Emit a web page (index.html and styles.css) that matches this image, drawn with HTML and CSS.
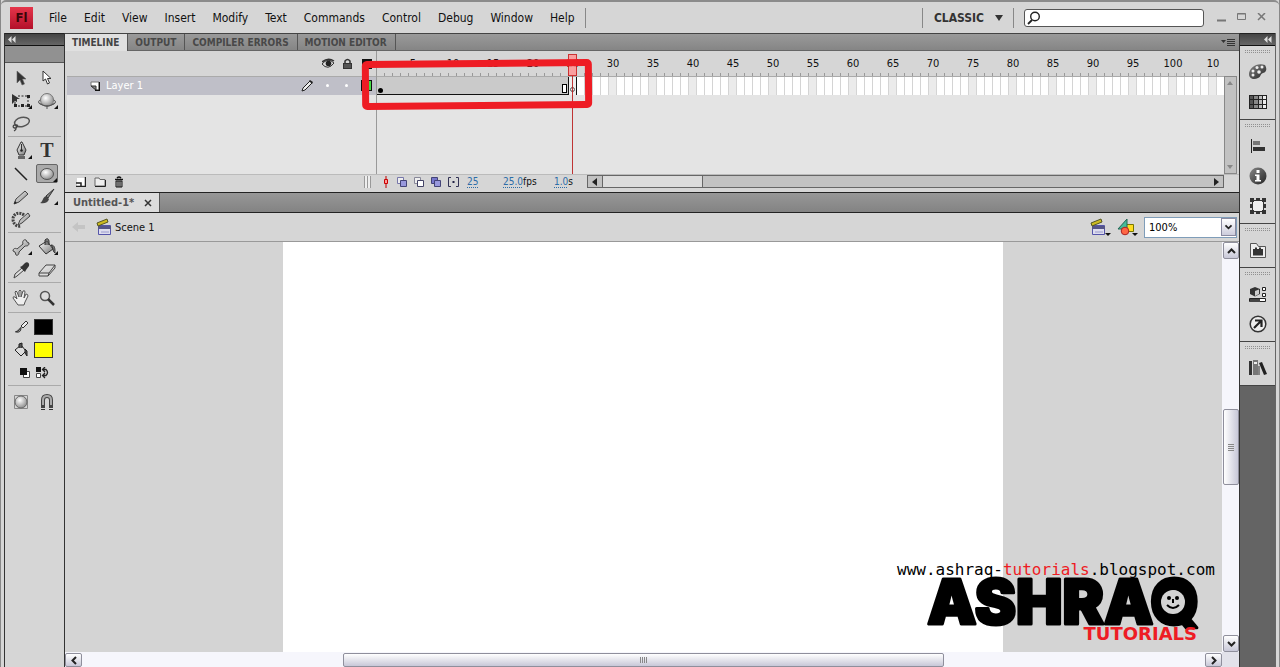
FILE: index.html
```html
<!DOCTYPE html>
<html lang="en">
<head>
    <meta charset="UTF-8">
    <meta name="viewport" content="width=device-width, initial-scale=1.0">
    <title>Untitled-1</title>
    <link rel="stylesheet" href="styles.css">
</head>
<body>
    <svg class="defs" width="0" height="0" aria-hidden="true">
        <defs>
            <linearGradient id="metal" x1="0" y1="0" x2="1" y2="1">
                <stop offset="0" stop-color="#fff"/>
                <stop offset="1" stop-color="#777"/>
            </linearGradient>
            <radialGradient id="ball" cx="0.4" cy="0.35" r="0.7">
                <stop offset="0" stop-color="#fff"/>
                <stop offset="1" stop-color="#888"/>
            </radialGradient>
            <linearGradient id="dark" x1="0" y1="0" x2="1" y2="1">
                <stop offset="0" stop-color="#888"/>
                <stop offset="1" stop-color="#222"/>
            </linearGradient>
        </defs>
    </svg>

    <div class="app">
        <header class="menubar">
            <span class="app-logo">Fl</span>
            <nav class="menu">
                <button>File</button>
                <button>Edit</button>
                <button>View</button>
                <button>Insert</button>
                <button>Modify</button>
                <button>Text</button>
                <button>Commands</button>
                <button>Control</button>
                <button>Debug</button>
                <button>Window</button>
                <button>Help</button>
            </nav>
            <button class="workspace">CLASSIC <svg width="8" height="6"><path d="M0 0h8L4 6z" fill="#333"/></svg></button>
            <label class="search">
                <svg width="14" height="14" viewBox="0 0 14 14"><circle cx="8" cy="5.500" r="4.300" fill="none" stroke="#222" stroke-width="1.400"/><path d="M5 9L1 13" stroke="#222" stroke-width="1.800"/></svg>
                <input type="text" aria-label="Search">
            </label>
            <div class="window-buttons">
                <button aria-label="Minimize"><svg width="10" height="10"><path d="M0 7.500h9" stroke="#777" stroke-width="2"/></svg></button>
                <button aria-label="Maximize"><svg width="10" height="10"><path d="M.5 .5h8v6h-8zM.5 1h8" fill="none" stroke="#777"/></svg></button>
                <button aria-label="Close"><svg width="10" height="10"><path d="M1 0l7 7M8 0l-7 7" stroke="#777" stroke-width="1.500"/></svg></button>
            </div>
        </header>

        <main class="workarea">
            <aside class="tools">
                <div class="panel-top"><svg width="8" height="7"><path d="M3.500 0v7L0 3.500zM7.500 0v7L4 3.500z" fill="#ddd"/></svg></div>
                <div class="tools-title"></div>
                <div class="tool-group first">
                    <button aria-label="Selection"><svg width="20" height="20" viewBox="0 0 20 20"><path d="M6 3v12l3-3 2 5 2.500-1-2-5H15z" fill="#333" stroke="#666" stroke-width=".6"/></svg></button>
                    <button aria-label="Subselection"><svg width="20" height="20" viewBox="0 0 20 20"><path d="M6 3v10l2.500-2 2 5 2-1-2-4.500H14z" fill="#fff" stroke="#333"/></svg></button>
                    <button class="has-more" aria-label="Free Transform"><svg width="20" height="20" viewBox="0 0 20 20"><path d="M7 5h10v10H4V10" fill="none" stroke="#222" stroke-dasharray="2 1.500"/><path d="M1 3v10l3-3 2 1V8h3z" fill="#333"/><path d="M16 4h3v3h-3zM16 13h3v3h-3zM3 13h3v3H3zM10 13h3v3h-3z" fill="#222"/></svg></button>
                    <button class="has-more" aria-label="3D Rotation"><svg width="20" height="20" viewBox="0 0 20 20"><ellipse cx="10" cy="11" rx="8.500" ry="3.500" fill="none" stroke="#555"/><circle cx="10" cy="9" r="6.500" fill="url(#ball)" stroke="#777"/><path d="M2 12q8 6 16 0M10 14v4" fill="none" stroke="#555"/></svg></button>
                    <button aria-label="Lasso"><svg width="20" height="20" viewBox="0 0 20 20"><ellipse cx="11" cy="8" rx="7.500" ry="4.500" fill="none" stroke="#555" stroke-width="1.500" transform="rotate(-12 11 8)"/><path d="M5 11c-3-1-4 3-1 3s3-4 1-3c1 3 0 5-2 6" fill="none" stroke="#444" stroke-width="1.300"/></svg></button>
                </div>
                <div class="tool-group">
                    <button class="has-more" aria-label="Pen"><svg width="20" height="20" viewBox="0 0 20 20"><path d="M10 1L6 9l2 5h5l2-5-4-8z" fill="url(#metal)" stroke="#333"/><path d="M10.500 3v6" stroke="#333"/><circle cx="10.500" cy="9.500" r="1.300" fill="#222"/><path d="M7 15h7v3H7z" fill="#666"/></svg></button>
                    <button class="text-tool" aria-label="Text tool">T</button>
                    <button aria-label="Line"><svg width="20" height="20" viewBox="0 0 20 20"><path d="M4 4l12 12" stroke="#222" stroke-width="1.500"/></svg></button>
                    <button class="has-more active" aria-label="Oval"><svg width="20" height="20" viewBox="0 0 20 20"><ellipse cx="10" cy="10" rx="6.500" ry="5.500" fill="url(#ball)" stroke="#555"/></svg></button>
                    <button aria-label="Pencil"><svg width="20" height="20" viewBox="0 0 20 20"><path d="M3 17l2-5 9-8 3 3-9 8z" fill="url(#metal)" stroke="#444"/><path d="M3 17l1-3 2 2z" fill="#222"/></svg></button>
                    <button class="has-more" aria-label="Brush"><svg width="20" height="20" viewBox="0 0 20 20"><path d="M17 2l-8 7 2 2z" fill="#888" stroke="#333"/><path d="M9 9l3 3c-1 4-5 5-9 4 3-1 2-5 6-7z" fill="#444"/></svg></button>
                    <button aria-label="Deco"><svg width="20" height="20" viewBox="0 0 20 20"><path d="M13 5C8 1 2 4 2 9s4 8 8 7" fill="none" stroke="#444" stroke-width="3" stroke-dasharray="2 1"/><path d="M7 15l2-5 8-7 2 3-8 7z" fill="url(#metal)" stroke="#444"/></svg></button>
                </div>
                <div class="tool-group">
                    <button class="has-more" aria-label="Bone"><svg width="20" height="20" viewBox="0 0 20 20"><path d="M12 7c-1-3 1-5 3-4l1 2 2 1c0 3-2 3-4 3l-6 6c0 3-2 4-3 3l-1-3-2-1c0-3 3-3 4-2z" fill="url(#metal)" stroke="#444"/></svg></button>
                    <button class="has-more" aria-label="Paint Bucket"><svg width="20" height="20" viewBox="0 0 20 20"><path d="M2 9l8-5 6 8-7 5z" fill="url(#metal)" stroke="#333"/><path d="M8 8V3q3-3 4 1v4M14 8c4 0 4 4 4 8-3-1-1-6-4-8z" fill="#555" fill-opacity=".7" stroke="#333"/></svg></button>
                    <button aria-label="Eyedropper"><svg width="20" height="20" viewBox="0 0 20 20"><path d="M3 18l1-4 7-6 2 2-7 6z" fill="#ddd" stroke="#444"/><path d="M9 7l5 5 1-2 3-4c1-3-2-5-4-3l-3 3z" fill="#333"/></svg></button>
                    <button aria-label="Eraser"><svg width="20" height="20" viewBox="0 0 20 20"><path d="M2 13l7-8h9l-6 8zM2 13v3h9l7-8V5M12 13l-1 3" fill="#ddd" stroke="#444"/></svg></button>
                </div>
                <div class="tool-group tall">
                    <button aria-label="Hand"><svg width="20" height="20" viewBox="0 0 20 20"><path d="M7 17L2 10q0-2 2-1l2 2-2-7q1-2 2 0l2 5V3q1-2 2 0v6l2-6q2-1 2 1l-1 6 2-4q2 0 2 2l-3 6-1 3z" fill="#eee" stroke="#555"/></svg></button>
                    <button aria-label="Zoom"><svg width="20" height="20" viewBox="0 0 20 20"><circle cx="8" cy="8" r="4.500" fill="#ddd" stroke="#555" stroke-width="1.500"/><path d="M11 11l6 6" stroke="#333" stroke-width="2.500"/></svg></button>
                </div>
                <div class="tool-group">
                    <button aria-label="Stroke color"><svg width="16" height="16" viewBox="0 0 16 16"><path d="M2 13l3-1 5-6M3 13q5 1 5-4" fill="#999" stroke="#333"/><path d="M8 7l5-5 2 2-5 5z" fill="#eee" stroke="#333"/></svg></button>
                    <button class="swatch black" aria-label="Black"></button>
                    <button aria-label="Fill color"><svg width="16" height="16" viewBox="0 0 16 16"><path d="M2 8l6-5 5 6-5 5z" fill="#ddd" stroke="#222"/><path d="M6 6V2l3-1v5M12 7l2 2v5l-2-3z" fill="#555" stroke="#222"/></svg></button>
                    <button class="swatch yellow" aria-label="Yellow"></button>
                    <button class="push-right" aria-label="Black and white"><svg width="10" height="10"><path d="M3.500 3.500h6v6h-6z" fill="#fff" stroke="#444"/><path d="M0 0h7v7H0z" fill="#111"/></svg></button>
                    <button class="push-left" aria-label="Swap colors"><svg width="14" height="12"><path d="M0 0h5v5H0z" fill="#111"/><path d="M.5 6.500h4v4h-4z" fill="#fff" stroke="#444"/><path d="M7 2.500h3q3 3 0 6H7M9 0L6.500 2.500 9 5M9 6L6.500 8.500 9 11" fill="none" stroke="#222" stroke-width="1.300"/></svg></button>
                </div>
                <div class="tool-group last">
                    <button aria-label="Object drawing"><svg width="16" height="16"><path d="M1.500 1.500h13v13h-13z" fill="none" stroke="#888"/><circle cx="8" cy="8" r="6" fill="url(#ball)" stroke="#666"/></svg></button>
                    <button aria-label="Snap to objects"><svg width="16" height="18" viewBox="0 0 16 18"><path d="M4 15V7q0-4 4-4t4 4v8" fill="none" stroke="#444" stroke-width="4"/><path d="M4 12V7q0-4 4-4t4 4v5" fill="none" stroke="#aaa" stroke-width="2"/><path d="M2 16.500h4M10 16.500h4" stroke="#333"/></svg></button>
                </div>
            </aside>

            <section class="center">
                <div class="tabs">
                    <button class="tab active">TIMELINE</button>
                    <button class="tab">OUTPUT</button>
                    <button class="tab">COMPILER ERRORS</button>
                    <button class="tab">MOTION EDITOR</button>
                    <button class="panel-menu" aria-label="Panel menu"><svg width="14" height="9"><path d="M0 2h5L2.500 5zM6 1h8v1H6zM6 3h8v1H6zM6 5h8v1H6zM6 7h8v1H6z" fill="#333"/></svg></button>
                </div>

                <div class="timeline">
                    <div class="layers">
                        <div class="layer-head">
                            <svg width="13" height="12" viewBox="0 0 13 12"><path d="M0 6q6-7 12-1-6 8-12 1z" fill="#ddd" stroke="#333"/><circle cx="6.500" cy="5.500" r="2.800" fill="#222"/><path d="M0 4q6-5 12-1" fill="none" stroke="#333" stroke-width="1.500"/></svg>
                            <svg width="13" height="12" viewBox="0 0 13 12"><path d="M4 6V3q2.500-3 5 0v3" fill="none" stroke="#333" stroke-width="1.500"/><path d="M2 5h9v6H2z" fill="#333"/><path d="M3 7h7M3 9h7" stroke="#777"/></svg>
                            <svg width="13" height="12" viewBox="0 0 13 12"><path d="M2 1h10v10H2z" fill="#111"/></svg>
                        </div>
                        <div class="layer-row">
                            <svg width="10" height="10" viewBox="0 0 10 10"><path d="M1 1h8v8H6L1 5z" fill="#fff" stroke="#777"/><path d="M1 5h5v4z" fill="#888" stroke="#333"/><path d="M9.500 1v8.500H5" fill="none" stroke="#111" stroke-width="1.500"/></svg>
                            <span class="layer-name">Layer 1</span>
                            <svg width="13" height="13" viewBox="0 0 13 13"><path d="M1 12l1-3 7-7 2 2-7 7z" fill="#eee" stroke="#222"/><path d="M9 1l3 2-1 2-3-3z" fill="#222"/></svg>
                            <i class="dot"></i>
                            <i class="dot"></i>
                            <i class="outline-box"></i>
                        </div>
                        <div class="layer-empty"></div>
                    </div>

                    <div class="frames">
                        <ol class="ruler">
                            <li>5</li><li>10</li><li>15</li><li>20</li><li>25</li><li>30</li><li>35</li>
                            <li>40</li><li>45</li><li>50</li><li>55</li><li>60</li><li>65</li><li>70</li>
                            <li>75</li><li>80</li><li>85</li><li>90</li><li>95</li><li>100</li><li>10</li>
                        </ol>
                        <div class="frame-row">
                            <div class="span-frames"><i class="key"></i><i class="span-end"></i></div>
                            <div class="blank-key"><i></i></div>
                        </div>
                        <div class="playhead"></div>
                        <div class="highlight-box"></div>
                    </div>

                    <div class="frames-scroll">
                        <svg width="11" height="12"><path d="M2 8h6L5 4z" fill="#888"/></svg>
                        <svg width="11" height="12"><path d="M2 4h6L5 8z" fill="#888"/></svg>
                    </div>
                </div>

                <div class="timeline-foot">
                    <div class="layer-actions">
                        <button aria-label="New layer"><svg width="10" height="10"><path d="M1 1h8v8H1z" fill="#fff"/><path d="M9.500 0v9.500H0M0 6h5v3" fill="none" stroke="#222" stroke-width="1.500"/></svg></button>
                        <button aria-label="New folder"><svg width="12" height="10"><path d="M1 2.500V1h4l1 1.500h5V9H1z" fill="#eee" stroke="#666"/><path d="M1 9.500h10.500V3" fill="none" stroke="#222"/></svg></button>
                        <button aria-label="Delete"><svg width="10" height="12"><path d="M1 3.500h8M3 2q2-2 4 0" fill="none" stroke="#111" stroke-width="1.500"/><path d="M2 5h6v6H2z" fill="#bbb" stroke="#111"/><path d="M4 5v6M6 5v6" stroke="#222"/></svg></button>
                    </div>
                    <div class="frame-actions">
                        <i class="splitter"></i>
                        <button aria-label="Center frame"><svg width="8" height="14"><path d="M4 1v12" stroke="#b00"/><path d="M2.500 4.500h3v4h-3z" fill="#f99" stroke="#c00"/></svg></button>
                        <button aria-label="Onion skin"><svg width="10" height="10"><path d="M.5.500h6v6h-6z" fill="#eee" stroke="#77a"/><path d="M3.500 3.500h6v6h-6z" fill="#99d" stroke="#447"/></svg></button>
                        <button aria-label="Onion skin outlines"><svg width="10" height="10"><path d="M.5.500h6v6h-6z" fill="#eee" stroke="#889"/><path d="M3.500 3.500h6v6h-6z" fill="#fff" stroke="#446"/></svg></button>
                        <button aria-label="Edit multiple frames"><svg width="10" height="10"><path d="M.5.500h6v6h-6z" fill="#77c" stroke="#447"/><path d="M3.500 3.500h6v6h-6z" fill="#99d" stroke="#447"/></svg></button>
                        <button aria-label="Modify markers"><svg width="11" height="10"><path d="M3 .5H.5v9H3M8 .5h2.500v9H8" fill="none" stroke="#335"/><path d="M4.500 4h2v2h-2z" fill="#224"/></svg></button>
                    </div>
                    <div class="readouts">
                        <span><a href="#">25</a></span>
                        <span><a href="#">25.0</a>fps</span>
                        <span><a href="#">1.0</a>s</span>
                    </div>
                    <div class="foot-scroll">
                        <button aria-label="Scroll left"><svg width="6" height="8"><path d="M5 0v8L0 4z" fill="#222"/></svg></button>
                        <i class="thumb"></i>
                        <button class="end" aria-label="Scroll right"><svg width="6" height="8"><path d="M1 0v8l5-4z" fill="#222"/></svg></button>
                    </div>
                </div>

                <div class="doc-tabs">
                    <button class="doc-tab">Untitled-1* <svg width="8" height="8"><path d="M1 1l6 6M7 1L1 7" stroke="#333" stroke-width="1.500"/></svg></button>
                </div>

                <div class="scene-bar">
                    <svg width="14" height="12"><path d="M0 6l6-5v3h7v4H6v3z" fill="#c4c4c4"/></svg>
                    <svg class="clap" width="16" height="18" viewBox="0 0 16 18"><path d="M2.500 7.500h12v9h-12z" fill="#dde" stroke="#55a"/><path d="M2 8h13v3H2z" fill="#558"/><path d="M5 14h8" stroke="#99c"/><path d="M1 5l10-4 1 3-10 4z" fill="#cb2" stroke="#552"/></svg>
                    <span class="scene-name">Scene 1</span>
                    <button class="has-more" aria-label="Edit scene"><svg width="18" height="18" viewBox="0 0 18 18"><path d="M2.500 7.500h12v9h-12z" fill="#dde" stroke="#55a"/><path d="M2 8h13v3H2z" fill="#558"/><path d="M5 14h8" stroke="#99c"/><path d="M1 5l10-4 1 3-10 4z" fill="#cb2" stroke="#552"/></svg></button>
                    <button class="has-more" aria-label="Edit symbols"><svg width="18" height="18" viewBox="0 0 18 18"><path d="M9.500 6.500h7v7h-7z" fill="#fd2" stroke="#770"/><path d="M1 11L10 1v10z" fill="#4b9" stroke="#265"/><circle cx="8" cy="13" r="3.800" fill="#f64" stroke="#a22"/></svg></button>
                    <div class="zoom">
                        <select aria-label="Zoom level"><option>100%</option></select>
                        <svg width="15" height="18" viewBox="0 0 15 18"><path d="M4 7l3.500 3.500L11 7" fill="none" stroke="#222" stroke-width="2"/></svg>
                    </div>
                </div>

                <div class="stage-area">
                    <div class="pasteboard">
                        <div class="stage"></div>
                        <div class="watermark">
                            <p class="site">www.ashraq-<span>tutorials</span>.blogspot.com</p>
                            <svg class="wordmark" width="310" height="48" viewBox="0 0 310 48">
                                <text x="302" y="46" text-anchor="end">ASHRAQ</text>
                                <circle cx="276" cy="24" r="12" fill="#d4d4d4"/>
                                <circle cx="272" cy="20" r="2"/>
                                <circle cx="280" cy="20" r="2"/>
                                <path d="M276 21v4M270 27q6 6 12 0" fill="none" stroke="#000" stroke-width="2"/>
                            </svg>
                            <p class="sub">TUTORIALS</p>
                        </div>
                    </div>
                    <div class="vscroll">
                        <button aria-label="Up"><svg width="9" height="6"><path d="M1 5l3.500-3.500L8 5" fill="none" stroke="#222" stroke-width="2"/></svg></button>
                        <i class="thumb"></i>
                        <button aria-label="Down"><svg width="9" height="6"><path d="M1 1l3.500 3.500L8 1" fill="none" stroke="#222" stroke-width="2"/></svg></button>
                    </div>
                    <div class="hscroll">
                        <button aria-label="Left"><svg width="6" height="9"><path d="M5 1L1.500 4.500 5 8" fill="none" stroke="#222" stroke-width="2"/></svg></button>
                        <i class="thumb"></i>
                        <button aria-label="Right"><svg width="6" height="9"><path d="M1 1l3.500 3.500L1 8" fill="none" stroke="#222" stroke-width="2"/></svg></button>
                    </div>
                </div>
            </section>

            <aside class="dock">
                <div class="panel-top right"><svg width="8" height="7"><path d="M3.500 0v7L0 3.500zM7.500 0v7L4 3.500z" fill="#ddd"/></svg></div>
                <div class="dock-group">
                    <button aria-label="Color"><svg width="20" height="18" viewBox="0 0 20 18"><path d="M17 2c-8-3-16 3-16 9 0 5 5 6 9 4 3-1 2-4 5-5 4-1 4-5 2-8z" fill="url(#dark)"/><g fill="#eee"><circle cx="5" cy="8" r="1.500"/><circle cx="9" cy="4.500" r="1.500"/><circle cx="14" cy="4" r="1.500"/><circle cx="5" cy="12" r="1.500"/><circle cx="11" cy="9" r="1.800"/></g></svg></button>
                    <button aria-label="Swatches"><svg width="18" height="14"><path d="M0 0h18v14H0z" fill="#222"/><path d="M1 1h3v3H1zM1 5h3v4H1zM1 10h3v3H1z" fill="#555"/><path d="M5 1h4v3H5zM5 5h4v4H5zM5 10h4v3H5z" fill="#888"/><path d="M10 1h3v3h-3zM10 5h3v4h-3zM10 10h3v3h-3z" fill="#bbb"/><path d="M14 1h3v3h-3zM14 5h3v4h-3zM14 10h3v3h-3z" fill="#eee"/></svg></button>
                </div>
                <div class="dock-group">
                    <button aria-label="Align"><svg width="16" height="16"><path d="M1.500 1v14" stroke="#222"/><path d="M3 3h7v4H3z" fill="#777"/><path d="M3 9h12v4H3z" fill="#333"/></svg></button>
                    <button aria-label="Info"><svg width="18" height="18"><circle cx="9" cy="9" r="8.500" fill="url(#dark)"/><path d="M7.500 3h3v3h-3zM6 7.500h4.500V13H12v1.500H6V13h1.500V9H6z" fill="#fff"/></svg></button>
                    <button aria-label="Transform"><svg width="16" height="16"><path d="M2.500 2.500h11v11h-11z" fill="#eee" stroke="#333"/><path d="M0 0h4v4H0zM6 0h4v3H6zM12 0h4v4h-4zM0 6h3v4H0zM13 6h3v4h-3zM0 12h4v4H0zM6 13h4v3H6zM12 12h4v4h-4z" fill="#333"/></svg></button>
                </div>
                <div class="dock-group">
                    <button aria-label="Library"><svg width="18" height="17"><path d="M1.500 15.500v-14h6l2 3h7v11z" fill="#eee" stroke="#555"/><path d="M4 7h2V5.500h2V7h2V5.500h2V7h2v6.500H4z" fill="#333"/></svg></button>
                </div>
                <div class="dock-group">
                    <button aria-label="Components"><svg width="18" height="17"><path d="M1 3l5-2 5 2v5l-5 2.500L1 8z" fill="#333"/><path d="M6 5l4-1.500V8L6 10z" fill="#ccc"/><path d="M13.500 1.500h3v3h-3zM13.500 7.500h3v3h-3zM.5 12.500h16v3H.5z" fill="#fff" stroke="#222"/><path d="M1 13h10v3H1z" fill="#444"/></svg></button>
                    <button aria-label="Behaviors"><svg width="18" height="18"><circle cx="9" cy="9" r="7.800" fill="#eee" stroke="#333" stroke-width="1.500"/><path d="M5 13l7-7M6 5.500h6.500V12" fill="none" stroke="#222" stroke-width="2.200"/></svg></button>
                </div>
                <div class="dock-group">
                    <button aria-label="Common libraries"><svg width="20" height="18"><path d="M1 2h3v14H1z" fill="#333"/><path d="M5 1h5v15H5z" fill="#777"/><path d="M6 3h3v2H6z" fill="#eee"/><path d="M11 4l3-1 5 12-3 1z" fill="#222"/><path d="M11 7v9" stroke="#333"/></svg></button>
                </div>
            </aside>
        </main>
    </div>
</body>
</html>
```

FILE: styles.css
```css
* {
    box-sizing: border-box;
}

body {
    margin: 0;
    background: #d6d6d6;
    font-family: "DejaVu Sans Condensed", "DejaVu Sans", sans-serif;
    font-size: 12px;
    color: #111;
}

button {
    display: flex;
    align-items: center;
    justify-content: center;
    padding: 0;
    border: none;
    background: none;
    font: inherit;
    color: inherit;
}

svg,
i {
    display: block;
    flex-shrink: 0;
}

p,
ol {
    margin: 0;
    padding: 0;
    list-style: none;
}

.defs {
    position: absolute;
}

.app {
    display: flex;
    flex-direction: column;
    height: 100vh;
    border-left: 1px solid #888;
    border-right: 1px solid #888;
    overflow: hidden;
}

/* Menu bar */
.menubar {
    display: flex;
    align-items: center;
    height: 33px;
    flex-shrink: 0;
    padding: 0 12px 0 9px;
    border-top: 2px solid #8b8b8b;
    border-radius: 5px 5px 0 0;
}

.app-logo {
    display: flex;
    align-items: center;
    justify-content: center;
    width: 23px;
    height: 22px;
    background: linear-gradient(#e5354a, #b3102a);
    font-size: 13px;
    font-weight: bold;
    color: #3a0508;
}

.menu {
    display: flex;
    gap: 17px;
    height: 20px;
    margin-left: 16px;
    padding-right: 10px;
    border-right: 1px solid #888;
}

.workspace {
    gap: 11px;
    height: 20px;
    margin-left: auto;
    padding: 0 10px 0 11px;
    border-left: 1px solid #888;
    border-right: 1px solid #888;
    font-weight: bold;
    color: #333;
}

.search {
    display: flex;
    align-items: center;
    width: 180px;
    height: 18px;
    margin: 1px 13px 0 10px;
    padding: 0 2px;
    border: 1px solid #555;
    border-radius: 3px;
    background: #fff;
}

.search input {
    width: 100%;
    min-width: 0;
    height: 14px;
    padding: 0 4px;
    border: none;
    outline: none;
    background: none;
    font: inherit;
}

.window-buttons {
    display: flex;
    gap: 10px;
}

/* Main row */
.workarea {
    display: flex;
    flex: 1;
    min-height: 0;
    padding: 0 3px;
}

.panel-top {
    display: flex;
    align-items: center;
    height: 13px;
    padding: 0 3px;
    border-top: 1px solid #222;
    border-bottom: 1px solid #111;
    background: linear-gradient(#444, #666);
}

.panel-top.right {
    justify-content: flex-end;
}

.tools {
    width: 61px;
    flex-shrink: 0;
    border-left: 1px solid #333;
    border-right: 1px solid #333;
}

.tools-title {
    height: 17px;
    border-bottom: 1px solid #555;
    background: #919191;
}

.tool-group {
    display: grid;
    grid-template-columns: 26px 26px;
    grid-auto-rows: 23px;
    margin: 0 3px;
    padding: 2px 0 1px;
    border-bottom: 1px solid #aaa;
}

.tool-group.first {
    padding-top: 3px;
}

.tool-group button,
.scene-bar button {
    position: relative;
}

.tool-group.tall {
    grid-auto-rows: 26px;
}

.tool-group.last {
    grid-auto-rows: 28px;
    border: none;
}

.has-more::after {
    content: "";
    position: absolute;
    right: 2px;
    bottom: 3px;
    border-left: 4px solid transparent;
    border-bottom: 4px solid #111;
}

.scene-bar .has-more::after {
    right: 0;
    bottom: 0;
    border-right: 3px solid transparent;
    border-left: 3px solid transparent;
    border-top: 3px solid #111;
    border-bottom: none;
}

.text-tool {
    font-family: "Liberation Serif", serif;
    font-size: 20px;
    font-weight: bold;
    color: #333;
}

.tool-group .active {
    margin: 2px;
    border: 1px solid #666;
    border-radius: 2px;
    background: #aaa;
}

.tool-group .active::after {
    right: 0;
    bottom: 0;
}

.swatch {
    width: 19px;
    height: 16px;
    margin-top: 4px;
    border: 1px solid #333;
}

.swatch.black {
    background: #000;
}

.swatch.yellow {
    background: #ff0;
}

.push-right {
    padding-left: 8px;
}

.push-left {
    padding-right: 8px;
}

/* Center column */
.center {
    display: flex;
    flex-direction: column;
    flex: 1;
    min-width: 0;
}

.tabs {
    display: flex;
    height: 18px;
    flex-shrink: 0;
    border-top: 1px solid #444;
    border-bottom: 1px solid #666;
    background: linear-gradient(#9a9a9a, #858585);
}

.tab {
    padding: 0 8px 0 7px;
    border-right: 1px solid #555;
    font-size: 10px;
    font-weight: bold;
    color: #484848;
}

.tab.active {
    height: 17px;
    background: #e0e0e0;
    color: #444;
}

.panel-menu {
    margin-left: auto;
    padding-right: 4px;
}

.timeline {
    display: flex;
    height: 123px;
    flex-shrink: 0;
    padding: 0 2px;
}

.layers {
    display: flex;
    flex-direction: column;
    width: 309px;
    flex-shrink: 0;
}

.layer-head {
    display: flex;
    align-items: center;
    justify-content: flex-end;
    gap: 6px;
    height: 26px;
    padding-right: 3px;
    border-bottom: 1px solid #aaa;
}

.layer-row {
    display: flex;
    align-items: center;
    height: 18px;
    padding: 0 4px 1px 23px;
    background: #bfbfc8;
    font-size: 11px;
    color: #fff;
}

.layer-name {
    flex: 1;
    margin-left: 6px;
}

.dot {
    width: 3px;
    height: 3px;
    margin-left: 12px;
    border-radius: 2px;
    background: #fff;
}

.dot + .dot {
    margin-left: 16px;
}

.outline-box {
    width: 11px;
    height: 11px;
    margin-left: 13px;
    border: 1px solid #111;
    background: #4d4;
}

.layer-empty {
    flex: 1;
    background: #e4e4e4;
}

.frames {
    position: relative;
    flex: 1;
    min-width: 0;
    background: #e4e4e4;
    border-left: 1px solid #999;
}

.ruler {
    display: flex;
    height: 26px;
    padding-left: 16px;
    overflow: hidden;
    border-bottom: 1px solid #aaa;
    background: repeating-linear-gradient(90deg, transparent 0 7px, #999 7px 8px) 0 22px / 100% 3px no-repeat #d6d6d6;
    font-size: 11px;
    line-height: 25px;
}

.ruler li {
    width: 40px;
    flex-shrink: 0;
    text-align: center;
}

.frame-row {
    display: flex;
    height: 18px;
    background:
        repeating-linear-gradient(90deg, transparent 0 7px, #d4d4d4 7px 8px),
        repeating-linear-gradient(90deg, #fff 0 32px, #ebebeb 32px 40px);
}

.span-frames {
    display: flex;
    align-items: flex-end;
    justify-content: space-between;
    width: 192px;
    padding: 0 1px 1px;
    border-right: 1px solid #111;
    border-bottom: 1px solid #111;
    background: #cacaca;
}

.key {
    width: 5px;
    height: 5px;
    border-radius: 3px;
    background: #000;
}

.span-end {
    width: 5px;
    height: 9px;
    border: 1px solid #000;
    background: #fff;
}

.blank-key {
    display: flex;
    align-items: flex-end;
    justify-content: center;
    width: 8px;
    padding-bottom: 3px;
    border-right: 1px solid #111;
    background: #eee;
}

.blank-key i {
    width: 5px;
    height: 5px;
    border: 1px solid #555;
    border-radius: 3px;
}

.playhead {
    position: absolute;
    top: 3px;
    bottom: 0;
    left: 191px;
    width: 9px;
    background:
        linear-gradient(#f99, #f99) 1px 1px / 7px 20px no-repeat,
        linear-gradient(#c22, #c22) 0 0 / 9px 22px no-repeat,
        linear-gradient(#b22, #b22) 4px 0 / 1px 100% no-repeat;
    opacity: 0.9;
}

.highlight-box {
    position: absolute;
    top: 9px;
    left: -15px;
    width: 230px;
    height: 49px;
    border: 7px solid #ee1c24;
    border-radius: 5px;
    transform: rotate(-0.5deg);
}

.frames-scroll {
    display: flex;
    flex-direction: column;
    justify-content: space-between;
    width: 13px;
    margin-top: 25px;
    border: 1px solid #888;
    background: #c2c2c2;
}

.timeline-foot {
    display: flex;
    align-items: center;
    height: 18px;
    flex-shrink: 0;
    padding: 0 15px 4px 11px;
    border-top: 1px solid #bbb;
}

.layer-actions,
.frame-actions {
    display: flex;
    align-items: center;
    gap: 8px;
}

.layer-actions {
    width: 288px;
}

.frame-actions {
    gap: 7px;
}

.splitter {
    width: 7px;
    height: 12px;
    margin-right: 4px;
    background: repeating-linear-gradient(90deg, #999 0 1px, #eee 1px 3px);
}

.readouts {
    display: grid;
    grid-template-columns: 36px 51px 33px;
    margin-left: 8px;
    font-size: 10px;
}

.readouts a {
    color: #2d6da8;
    text-decoration: underline dotted;
    text-underline-offset: 2px;
}

.foot-scroll {
    display: flex;
    flex: 1;
    height: 13px;
    border: 1px solid #666;
    background: #c2c2c2;
}

.foot-scroll button {
    width: 14px;
}

.foot-scroll .thumb {
    width: 101px;
    border: 1px solid #666;
    border-width: 0 1px;
    background: #dcdcdc;
}

.foot-scroll .end {
    margin-left: auto;
}

.doc-tabs {
    display: flex;
    height: 21px;
    flex-shrink: 0;
    border-top: 1px solid #222;
    border-bottom: 1px solid #222;
    background: linear-gradient(#979797, #838383);
}

.doc-tab {
    gap: 10px;
    padding: 0 7px 0 8px;
    border-right: 1px solid #555;
    background: #dcdcdc;
    font-size: 11px;
    font-weight: bold;
    color: #555;
}

.scene-bar {
    display: flex;
    align-items: center;
    height: 29px;
    flex-shrink: 0;
    padding: 0 2px 0 7px;
    border-bottom: 1px solid #999;
    font-size: 11px;
}

.clap {
    margin-left: 10px;
}

.scene-name {
    flex: 1;
    margin-left: 3px;
}

.scene-bar button {
    width: 21px;
    margin-right: 6px;
    justify-content: flex-start;
}

.zoom {
    display: flex;
    align-items: center;
    width: 93px;
    height: 21px;
    border: 1px solid #7f9db9;
    background: #fff;
}

.zoom select {
    flex: 1;
    min-width: 0;
    height: 19px;
    padding: 0 4px;
    border: none;
    outline: none;
    appearance: none;
    background: none;
    font: inherit;
}

.zoom svg {
    border: 1px solid #8a8aa0;
    background: linear-gradient(#fff, #ccccdc);
}

.stage-area {
    display: grid;
    grid-template-columns: 1fr 17px;
    grid-template-rows: 1fr 15px;
    flex: 1;
    min-height: 0;
    background: #e2e2ea;
}

.pasteboard {
    position: relative;
    display: flex;
    padding: 0 219px 0 218px;
    overflow: hidden;
    background: #d4d4d4;
}

.stage {
    flex: 1;
    background: #fff;
}

.watermark {
    position: absolute;
    right: 7px;
    bottom: 10px;
    width: 318px;
}

.site {
    font-family: "DejaVu Sans Mono", monospace;
    font-size: 16px;
    line-height: 16px;
    color: #000;
    white-space: nowrap;
}

.site span,
.sub {
    color: #ee1c24;
}

.wordmark {
    overflow: visible;
}

.wordmark text {
    font-family: Inter, "DejaVu Sans", sans-serif;
    font-size: 62px;
    font-weight: 900;
    stroke: #000;
    stroke-width: 3px;
    stroke-linejoin: round;
}

.sub {
    padding-right: 18px;
    font-family: "DejaVu Sans", sans-serif;
    font-size: 18px;
    line-height: 16px;
    font-weight: bold;
    text-align: right;
}

.vscroll,
.hscroll {
    display: flex;
    background: #f6f6fc;
}

.vscroll {
    flex-direction: column;
}

.hscroll {
    justify-content: space-between;
}

.vscroll button,
.hscroll button,
.vscroll .thumb,
.hscroll .thumb {
    border: 1px solid #8f8f9c;
    border-radius: 2px;
    background: linear-gradient(#fff, #c8c8d8);
}

.vscroll button {
    height: 17px;
    margin-left: 1px;
}

.vscroll button:last-child {
    margin-top: auto;
}

.hscroll button {
    width: 17px;
    margin-top: 1px;
}

.vscroll .thumb {
    height: 76px;
    margin: 150px 0 0 1px;
    background:
        repeating-linear-gradient(#888 0 1px, transparent 1px 2px) center / 6px 7px no-repeat,
        linear-gradient(90deg, #fff, #c8c8d8);
}

.hscroll .thumb {
    width: 52%;
    margin-top: 1px;
    background:
        repeating-linear-gradient(90deg, #888 0 1px, transparent 1px 2px) center / 7px 6px no-repeat,
        linear-gradient(#fff, #c8c8d8);
}

/* Right dock */
.dock {
    width: 37px;
    flex-shrink: 0;
    border-left: 1px solid #333;
    border-right: 1px solid #666;
    background: #646464;
}

.dock-group {
    padding: 11px 0 2px;
    border-bottom: 1px solid #444;
    background:
        linear-gradient(#d6d6d6, #d6d6d6) 0 8px / 100% 100% no-repeat,
        linear-gradient(#d6d6d6, #d6d6d6) 0 0 / 4px 100% no-repeat,
        linear-gradient(#d6d6d6, #d6d6d6) 100% 0 / 4px 100% no-repeat,
        linear-gradient(#d6d6d6, #d6d6d6) 0 0 / 100% 3px no-repeat,
        conic-gradient(#909090 25%, #d6d6d6 0) 0 0 / 2px 2px;
}

.dock-group button {
    width: 100%;
    height: 30px;
}
```
